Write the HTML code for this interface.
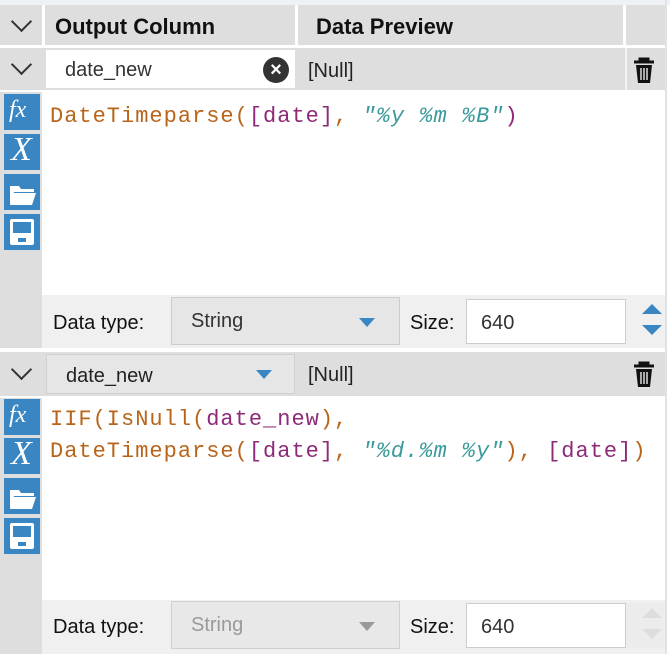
<!DOCTYPE html>
<html><head><meta charset="utf-8"><style>
body{margin:0;width:670px;height:654px;background:#fff;position:relative;overflow:hidden;font-family:"Liberation Sans",sans-serif}
.a{position:absolute;box-sizing:border-box}
.g{background:#dedede}
.code{font-family:"Liberation Mono",monospace;font-size:22px;letter-spacing:1px;color:#b8651a;white-space:pre;line-height:32px}
.p{color:#8e2a78}.s{color:#3c9a9a;font-style:italic}
.ic{position:absolute;left:4px;width:36px;height:36px;background:#3a86c2}
.lbl{font-size:20px;color:#111}
.chev{position:absolute;width:13px;height:13px;border-right:2.5px solid #333;border-bottom:2.5px solid #333;transform:rotate(45deg)}
</style></head><body>
<div class="a" style="left:0;top:0;width:670px;height:5px;background:#eef1f6"></div>
<div class="a g" style="left:0;top:5px;width:42px;height:40px"></div>
<div class="chev" style="left:14px;top:14px"></div>
<div class="a g" style="left:45px;top:5px;width:250px;height:40px;font-weight:bold;font-size:22px;padding:9px 0 0 10px;color:#111">Output Column</div>
<div class="a g" style="left:298px;top:5px;width:325px;height:40px;font-weight:bold;font-size:22px;padding:9px 0 0 18px;color:#111">Data Preview</div>
<div class="a g" style="left:626px;top:5px;width:39px;height:40px"></div>
<div class="a g" style="left:0;top:48px;width:665px;height:42px"></div>
<div class="chev" style="left:14px;top:57px"></div>
<div class="a" style="left:46px;top:50px;width:249px;height:38px;background:#fff;font-size:20px;color:#333;padding:9px 0 0 19px">date_new</div>
<div class="a" style="left:263px;top:57px;width:26px;height:26px;border-radius:50%;background:#333;color:#fff;font-size:20px;font-weight:bold;text-align:center;line-height:26px">×</div>
<div class="a" style="left:308px;top:60px;font-size:20px;color:#222">[Null]</div>
<div class="a" style="left:625px;top:48px;width:2px;height:42px;background:#f3f3f3"></div>
<svg class="a" style="left:632px;top:55px" width="24" height="30" viewBox="0 0 24 30"><path d="M2 7h20M8 7V4h8v3" stroke="#111" stroke-width="3" fill="none"/><path d="M4 10h16l-2 18H6z" fill="#111"/><path d="M9 13v12M12 13v12M15 13v12" stroke="#ddd" stroke-width="1.5"/></svg>
<div class="a g" style="left:0;top:92px;width:42px;height:256px"></div>
<div class="ic" style="top:94px"><span style="color:#fff;font-family:'Liberation Serif',serif;font-style:italic;font-size:24px;position:absolute;left:5px;top:3px">fx</span></div>
<div class="ic" style="top:134px"><span style="color:#fff;font-family:'Liberation Serif',serif;font-style:italic;font-size:34px;position:absolute;left:7px;top:-3px">X</span></div>
<div class="ic" style="top:174px"><svg width="36" height="36"><path d="M6 12h9l2 3h13v3H10l-4 12z" fill="#fff"/><path d="M8 19h24l-4 12H6z" fill="#fff"/></svg></div>
<div class="ic" style="top:214px"><svg width="36" height="36"><rect x="6" y="5" width="24" height="26" rx="2" fill="#fff"/><rect x="9" y="8" width="18" height="11" fill="#3a86c2"/><rect x="14" y="24" width="8" height="4" fill="#3a86c2"/></svg></div>
<div class="a code" style="left:50px;top:101px">DateTimeparse(<span class="p">[date]</span>, <span class="s">"%y %m %B"</span><span class="p">)</span></div>
<div class="a" style="left:42px;top:295px;width:623px;height:53px;background:#f0f0f0"></div>
<div class="a lbl" style="left:53px;top:312px">Data type:</div>
<div class="a" style="left:171px;top:297px;width:229px;height:48px;background:#e6e6e6;border:1px solid #ccc;font-size:20px;color:#333;padding:12px 0 0 19px">String</div>
<div class="a" style="left:359px;top:318px;width:0;height:0;border-left:8px solid transparent;border-right:8px solid transparent;border-top:9px solid #3a86c2"></div>
<div class="a lbl" style="left:410px;top:312px">Size:</div>
<div class="a" style="left:466px;top:299px;width:160px;height:45px;background:#fff;border:1px solid #ccc;font-size:20px;color:#333;padding:12px 0 0 14px">640</div>
<div class="a" style="left:626px;top:299px;width:39px;height:45px;background:#f0f0f0"></div>
<div class="a" style="left:642px;top:304px;border-left:10px solid transparent;border-right:10px solid transparent;border-bottom:10px solid #3a86c2"></div>
<div class="a" style="left:642px;top:325px;border-left:10px solid transparent;border-right:10px solid transparent;border-top:10px solid #3a86c2"></div>
<div class="a g" style="left:0;top:352px;width:665px;height:44px"></div>
<div class="chev" style="left:14px;top:362px"></div>
<div class="a" style="left:46px;top:354px;width:249px;height:40px;background:#e6e6e6;border:1px solid #d0d0d0;font-size:20px;color:#222;padding:10px 0 0 19px">date_new</div>
<div class="a" style="left:256px;top:370px;border-left:8px solid transparent;border-right:8px solid transparent;border-top:9px solid #3a86c2"></div>
<div class="a" style="left:308px;top:364px;font-size:20px;color:#222">[Null]</div>
<svg class="a" style="left:632px;top:359px" width="24" height="30" viewBox="0 0 24 30"><path d="M2 7h20M8 7V4h8v3" stroke="#111" stroke-width="3" fill="none"/><path d="M4 10h16l-2 18H6z" fill="#111"/><path d="M9 13v12M12 13v12M15 13v12" stroke="#ddd" stroke-width="1.5"/></svg>
<div class="a g" style="left:0;top:398px;width:42px;height:256px"></div>
<div class="ic" style="top:399px"><span style="color:#fff;font-family:'Liberation Serif',serif;font-style:italic;font-size:24px;position:absolute;left:5px;top:3px">fx</span></div>
<div class="ic" style="top:438px"><span style="color:#fff;font-family:'Liberation Serif',serif;font-style:italic;font-size:34px;position:absolute;left:7px;top:-3px">X</span></div>
<div class="ic" style="top:478px"><svg width="36" height="36"><path d="M6 12h9l2 3h13v3H10l-4 12z" fill="#fff"/><path d="M8 19h24l-4 12H6z" fill="#fff"/></svg></div>
<div class="ic" style="top:518px"><svg width="36" height="36"><rect x="6" y="5" width="24" height="26" rx="2" fill="#fff"/><rect x="9" y="8" width="18" height="11" fill="#3a86c2"/><rect x="14" y="24" width="8" height="4" fill="#3a86c2"/></svg></div>
<div class="a code" style="left:50px;top:404px">IIF(IsNull(<span class="p">date_new</span>),
DateTimeparse(<span class="p">[date]</span>, <span class="s">"%d.%m %y"</span>), <span class="p">[date]</span>)</div>
<div class="a" style="left:42px;top:600px;width:623px;height:54px;background:#f0f0f0"></div>
<div class="a lbl" style="left:53px;top:616px">Data type:</div>
<div class="a" style="left:171px;top:601px;width:229px;height:48px;background:#e8e8e8;border:1px solid #d0d0d0;font-size:20px;color:#999;padding:12px 0 0 19px">String</div>
<div class="a" style="left:359px;top:622px;border-left:8px solid transparent;border-right:8px solid transparent;border-top:9px solid #999"></div>
<div class="a lbl" style="left:410px;top:616px">Size:</div>
<div class="a" style="left:466px;top:603px;width:160px;height:45px;background:#fff;border:1px solid #ccc;font-size:20px;color:#333;padding:12px 0 0 14px">640</div>
<div class="a" style="left:626px;top:603px;width:39px;height:45px;background:#ececec"></div>
<div class="a" style="left:642px;top:608px;border-left:10px solid transparent;border-right:10px solid transparent;border-bottom:10px solid #ddd"></div>
<div class="a" style="left:642px;top:629px;border-left:10px solid transparent;border-right:10px solid transparent;border-top:10px solid #ddd"></div>
<div class="a" style="left:665px;top:0;width:2px;height:654px;background:#dde3ea"></div>
</body></html>
